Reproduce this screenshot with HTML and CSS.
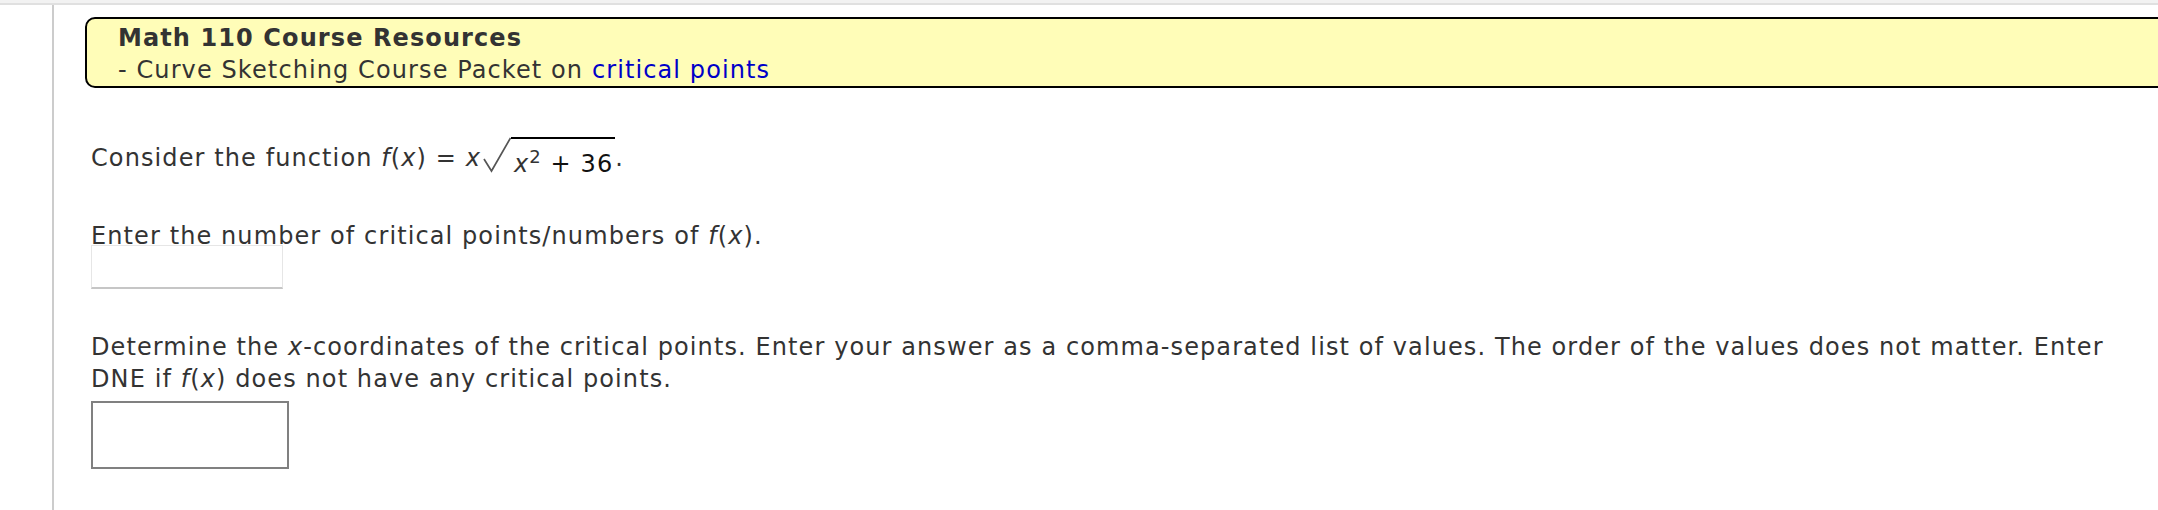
FILE: index.html
```html
<!DOCTYPE html>
<html lang="en">
<head>
<meta charset="utf-8">
<title>Critical points</title>
<link rel="stylesheet" href="styles.css">
</head>
<body>
<div class="topbar"></div>
<div class="page">
  <div class="rail"></div>
  <main class="content">
    <div class="resource">
      <div class="res-title">Math 110 Course Resources</div>
      <div class="res-line">- Curve Sketching Course Packet on <a class="res-link" href="#">critical points</a></div>
    </div>
    <p class="q q-first">Consider the function <i>f</i>(<i>x</i>) = <i>x</i><span class="sqrt"><svg class="radical" width="28" height="37" viewBox="0 0 28 37"><path d="M1 22 L8.5 34 L27.5 1" fill="none" stroke="#555" stroke-width="1.7" stroke-linejoin="miter"/></svg><span class="radicand"><i class="rx">x</i><sup>2</sup> + 36</span></span>.</p>
    <p class="q q-second">Enter the number of critical points/numbers of <i>f</i>(<i>x</i>).</p>
    <div class="answer answer-small"></div>
    <p class="q q-third">Determine the <i>x</i>-coordinates of the critical points. Enter your answer as a comma-separated list of values. The order of the values does not matter. Enter<br>DNE if <i>f</i>(<i>x</i>) does not have any critical points.</p>
    <div class="answer answer-large"></div>
  </main>
</div>
</body>
</html>
```
FILE: styles.css
```css
html, body {
  margin: 0;
  height: 100%;
}
body {
  font-family: "DejaVu Sans", Verdana, sans-serif;
  font-size: 24px;
  letter-spacing: 1.1px;
  color: #333;
  background: #fff;
  overflow: hidden;
  display: flex;
  flex-direction: column;
}
.topbar {
  flex: none;
  height: 3px;
  background: #f2f2f2;
  border-bottom: 2px solid #e0e0e0;
}
.page {
  flex: 1;
  display: flex;
  min-height: 0;
}
.rail {
  flex: none;
  width: 52px;
  border-right: 2px solid #cccccc;
}
.content {
  flex: 1;
  min-width: 0;
  padding: 12px 0 0 37px;
}
.resource {
  margin: 0 -80px 0 -6px;
  border: 2px solid #000;
  border-radius: 10px;
  background: #fffdb8;
  padding: 3px 0 0 31px;
  line-height: 32px;
}
.res-title {
  font-weight: bold;
}
.res-link {
  color: #0000c8;
  text-decoration: none;
}
.q {
  margin: 0;
  line-height: 32px;
  white-space: nowrap;
}
.q-first { margin-top: 54px; }
.q-second { margin-top: 46px; }
.q-third { margin-top: 42px; }
.sqrt {
  white-space: nowrap;
}
.radical {
  vertical-align: -8px;
  margin: -5px 0 0 2px;
}
.radicand {
  display: inline-block;
  border-top: 2px solid #000;
  padding: 13px 2px 0 3px;
  margin: -5px 0 -3px 0;
  line-height: 24px;
  vertical-align: -6px;
  color: #111;
}
.radicand .rx {
  color: #333;
}
.radicand sup {
  font-size: 0.75em;
  vertical-align: 0.5em;
  line-height: 0;
  color: #333;
}
.answer {
  box-sizing: border-box;
  background: #fff;
}
.answer-small {
  width: 192px;
  height: 44px;
  margin-top: -7px;
  border: 1px solid #e6e6e6;
  border-bottom: 2px solid #c6c6c6;
}
.answer-large {
  width: 198px;
  height: 68px;
  margin-top: 6px;
  border: 2px solid #808080;
}
```
